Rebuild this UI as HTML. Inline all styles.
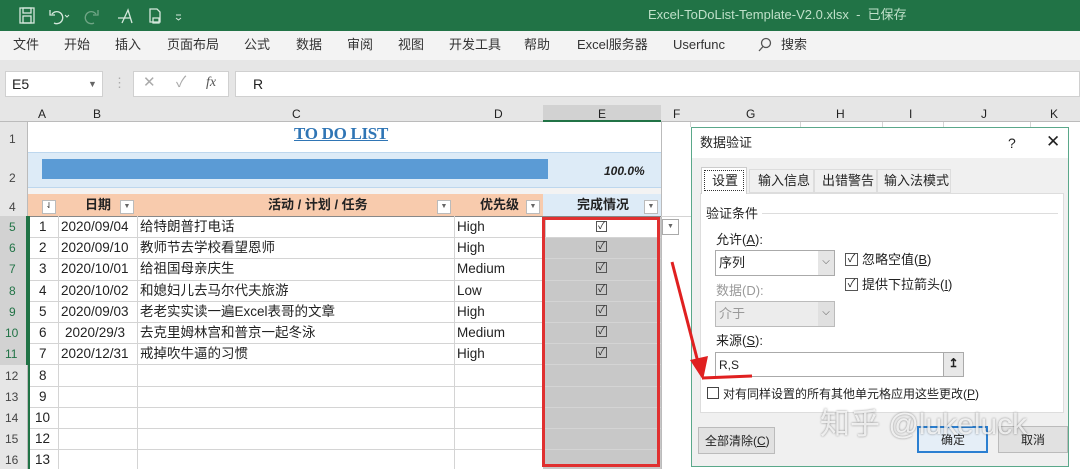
<!DOCTYPE html>
<html><head><meta charset="utf-8"><style>
*{margin:0;padding:0;box-sizing:border-box}
body{width:1080px;height:469px;overflow:hidden;background:#fff;font-family:"Liberation Sans","Noto Sans CJK SC",sans-serif;position:relative;font-size:13px;color:#222}
.a{position:absolute}
.t{position:absolute;white-space:nowrap;line-height:16px}
.hl{position:absolute;height:1px;background:#d4d4d4}
.vl{position:absolute;width:1px;background:#d4d4d4}
.chk{position:absolute;width:11px;height:11px;border:1px solid #555;font-size:10px;line-height:9px;text-align:center}
</style></head><body>
<!-- title bar -->
<div class="a" style="left:0;top:0;width:1080px;height:31px;background:#217346"></div>
<svg class="a" style="left:18px;top:6px" width="170" height="20" fill="none" stroke="#d5e8dc" stroke-width="1.3">
<rect x="2" y="2" width="14" height="15"/><rect x="5" y="2" width="8" height="5"/><rect x="5" y="10" width="8" height="7"/>
<path d="M34 8 a6 6 0 1 1 2 9 M32 4 v5 h5"/><path d="M47 9 l2 2 l2 -2" stroke-width="1"/>
<path d="M78 8 a6 6 0 1 0 -2 9 M80 4 v5 h-5" stroke="#6fa585"/>
<path d="M104 17 l6 -13 l4 13 M100 12 h12"/>
<path d="M132 3 h7 l3 3 v10 h-10z M135 12 h6 v5 h-6z"/>
<path d="M158 9 h5 M158 12 l2.5 2 l2.5 -2" stroke-width="1"/>
</svg>
<div class="t" style="left:648px;top:7px;color:#bfe0c9;font-size:13px">Excel-ToDoList-Template-V2.0.xlsx&nbsp; - &nbsp;已保存</div>
<!-- menu -->
<div class="a" style="left:0;top:31px;width:1080px;height:29px;background:#f3f3f3"></div>
<div class="t" style="top:37px;left:13px;color:#333">文件</div>
<div class="t" style="top:37px;left:64px;color:#333">开始</div>
<div class="t" style="top:37px;left:115px;color:#333">插入</div>
<div class="t" style="top:37px;left:167px;color:#333">页面布局</div>
<div class="t" style="top:37px;left:244px;color:#333">公式</div>
<div class="t" style="top:37px;left:296px;color:#333">数据</div>
<div class="t" style="top:37px;left:347px;color:#333">审阅</div>
<div class="t" style="top:37px;left:398px;color:#333">视图</div>
<div class="t" style="top:37px;left:449px;color:#333">开发工具</div>
<div class="t" style="top:37px;left:524px;color:#333">帮助</div>
<div class="t" style="top:37px;left:577px;color:#333">Excel服务器</div>
<div class="t" style="top:37px;left:673px;color:#333">Userfunc</div>
<svg class="a" style="left:757px;top:37px" width="16" height="16" fill="none" stroke="#555" stroke-width="1.3"><circle cx="9" cy="6" r="4.5"/><path d="M6 9.5 L2 14"/></svg>
<div class="t" style="top:37px;left:781px;color:#333">搜索</div>
<!-- formula area -->
<div class="a" style="left:0;top:60px;width:1080px;height:45px;background:#e6e6e6"></div>
<div class="a" style="left:5px;top:71px;width:98px;height:26px;background:#fff;border:1px solid #d0d0d0"></div>
<div class="t" style="left:12px;top:76px;font-size:14px">E5</div>
<div class="t" style="left:88px;top:76px;font-size:9px;color:#666">▼</div>
<div class="t" style="left:113px;top:75px;color:#aaa">⋮</div>
<div class="a" style="left:133px;top:71px;width:96px;height:26px;background:#fff;border:1px solid #d0d0d0"></div>
<div class="t" style="left:143px;top:75px;color:#aaa;font-size:15px">✕</div>
<div class="t" style="left:176px;top:75px;color:#aaa;font-size:15px">✓</div>
<div class="t" style="left:206px;top:75px;color:#555;font-style:italic;font-family:'Liberation Serif',serif;font-size:14px">fx</div>
<div class="a" style="left:235px;top:71px;width:845px;height:26px;background:#fff;border:1px solid #d0d0d0"></div>
<div class="t" style="left:253px;top:76px;font-size:14px">R</div>
<!-- column headers -->
<div class="a" style="left:0;top:105px;width:1080px;height:17px;background:#e6e6e6;border-bottom:1px solid #bbb"></div>
<div class="a" style="left:543px;top:105px;width:118px;height:17px;background:#d2d2d2;border-bottom:2px solid #217346"></div>
<div class="t" style="left:38px;top:106px;font-size:12px">A</div>
<div class="t" style="left:93px;top:106px;font-size:12px">B</div>
<div class="t" style="left:292px;top:106px;font-size:12px">C</div>
<div class="t" style="left:494px;top:106px;font-size:12px">D</div>
<div class="t" style="left:598px;top:106px;font-size:12px">E</div>
<div class="t" style="left:673px;top:106px;font-size:12px">F</div>
<div class="t" style="left:746px;top:106px;font-size:12px">G</div>
<div class="t" style="left:836px;top:106px;font-size:12px">H</div>
<div class="t" style="left:909px;top:106px;font-size:12px">I</div>
<div class="t" style="left:981px;top:106px;font-size:12px">J</div>
<div class="t" style="left:1050px;top:106px;font-size:12px">K</div>
<!-- row headers -->
<div class="a" style="left:0;top:122px;width:28px;height:347px;background:#e6e6e6;border-right:1px solid #bbb"></div>
<div class="a" style="left:0;top:216px;width:28px;height:149px;background:#d2d2d2;border-right:2px solid #217346"></div>
<div style="position:absolute;left:0;top:0;width:28px;font-size:12px;color:#444">
<div class="t" style="left:9px;top:131px">1</div><div class="t" style="left:9px;top:170px">2</div><div class="t" style="left:9px;top:199px">4</div>
<div class="t" style="left:9px;top:219px;color:#217346">5</div><div class="t" style="left:9px;top:240px;color:#217346">6</div><div class="t" style="left:9px;top:261px;color:#217346">7</div><div class="t" style="left:9px;top:283px;color:#217346">8</div><div class="t" style="left:9px;top:304px;color:#217346">9</div><div class="t" style="left:5px;top:325px;color:#217346">10</div><div class="t" style="left:5px;top:346px;color:#217346">11</div><div class="t" style="left:5px;top:368px">12</div><div class="t" style="left:5px;top:389px">13</div><div class="t" style="left:5px;top:410px">14</div><div class="t" style="left:5px;top:431px">15</div><div class="t" style="left:5px;top:452px">16</div>
</div>
<!-- row 1,2 -->
<div class="t" style="left:294px;top:126px;font-family:'Liberation Serif',serif;font-weight:bold;font-size:17px;color:#2f75b5;text-decoration:underline;letter-spacing:-0.3px">TO DO LIST</div>
<div class="a" style="left:28px;top:152px;width:633px;height:36px;background:#ddebf7;border-top:1px solid #bdd7ee;border-bottom:1px solid #bdd7ee"></div>
<div class="a" style="left:42px;top:159px;width:506px;height:20px;background:#5b9bd5"></div>
<div class="t" style="left:604px;top:163px;font-weight:bold;font-style:italic;font-size:12px">100.0%</div>
<div class="hl" style="left:28px;top:188px;width:633px;height:6px;background:#f3f3f3"></div>
<!-- header row 4 -->
<div class="a" style="left:28px;top:194px;width:515px;height:22px;background:#f8cbad"></div>
<div class="a" style="left:543px;top:194px;width:118px;height:22px;background:#ddebf7"></div>
<div class="t" style="left:85px;top:197px;font-weight:bold">日期</div>
<div class="t" style="left:268px;top:197px;font-weight:bold">活动 / 计划 / 任务</div>
<div class="t" style="left:480px;top:197px;font-weight:bold">优先级</div>
<div class="t" style="left:577px;top:197px;font-weight:bold">完成情况</div>
<div class="a" style="left:42px;top:200px;width:14px;height:14px;background:#fff;border:1px solid #bbb;font-size:8px;text-align:center">⇃</div>
<div class="a" style="left:120px;top:200px;width:14px;height:14px;background:#fff;border:1px solid #bbb;font-size:7px;text-align:center;line-height:12px;color:#666">▼</div>
<div class="a" style="left:437px;top:200px;width:14px;height:14px;background:#fff;border:1px solid #bbb;font-size:7px;text-align:center;line-height:12px;color:#666">▼</div>
<div class="a" style="left:526px;top:200px;width:14px;height:14px;background:#fff;border:1px solid #bbb;font-size:7px;text-align:center;line-height:12px;color:#666">▼</div>
<div class="a" style="left:644px;top:200px;width:14px;height:14px;background:#fff;border:1px solid #bbb;font-size:7px;text-align:center;line-height:12px;color:#666">▼</div>
<!-- data grid -->
<div class="a" style="left:543px;top:216px;width:118px;height:253px;background:#c8c8c8"></div>
<div class="a" style="left:546px;top:218px;width:111px;height:19px;background:#fff"></div>
<div class="hl" style="left:28px;top:216px;width:633px;background:#888"></div>
<div class="hl" style="left:28px;top:237px;width:633px"></div><div class="hl" style="left:28px;top:258px;width:633px"></div><div class="hl" style="left:28px;top:280px;width:633px"></div><div class="hl" style="left:28px;top:301px;width:633px"></div><div class="hl" style="left:28px;top:322px;width:633px"></div><div class="hl" style="left:28px;top:343px;width:633px"></div><div class="hl" style="left:28px;top:364px;width:633px"></div><div class="hl" style="left:28px;top:386px;width:633px"></div><div class="hl" style="left:28px;top:407px;width:633px"></div><div class="hl" style="left:28px;top:428px;width:633px"></div><div class="hl" style="left:28px;top:449px;width:633px"></div>
<div class="vl" style="left:58px;top:216px;height:253px"></div><div class="vl" style="left:137px;top:216px;height:253px"></div><div class="vl" style="left:454px;top:216px;height:253px"></div><div class="vl" style="left:661px;top:122px;height:347px;background:#bbb"></div>
<div style="font-size:13.5px">
<div class="t" style="left:39px;top:219px">1</div><div class="t" style="left:61px;top:219px">2020/09/04</div><div class="t" style="left:140px;top:219px">给特朗普打电话</div><div class="t" style="left:457px;top:219px">High</div>
<div class="t" style="left:39px;top:240px">2</div><div class="t" style="left:61px;top:240px">2020/09/10</div><div class="t" style="left:140px;top:240px">教师节去学校看望恩师</div><div class="t" style="left:457px;top:240px">High</div>
<div class="t" style="left:39px;top:261px">3</div><div class="t" style="left:61px;top:261px">2020/10/01</div><div class="t" style="left:140px;top:261px">给祖国母亲庆生</div><div class="t" style="left:457px;top:261px">Medium</div>
<div class="t" style="left:39px;top:283px">4</div><div class="t" style="left:61px;top:283px">2020/10/02</div><div class="t" style="left:140px;top:283px">和媳妇儿去马尔代夫旅游</div><div class="t" style="left:457px;top:283px">Low</div>
<div class="t" style="left:39px;top:304px">5</div><div class="t" style="left:61px;top:304px">2020/09/03</div><div class="t" style="left:140px;top:304px">老老实实读一遍Excel表哥的文章</div><div class="t" style="left:457px;top:304px">High</div>
<div class="t" style="left:39px;top:325px">6</div><div class="t" style="left:65px;top:325px">2020/29/3</div><div class="t" style="left:140px;top:325px">去克里姆林宫和普京一起冬泳</div><div class="t" style="left:457px;top:325px">Medium</div>
<div class="t" style="left:39px;top:346px">7</div><div class="t" style="left:61px;top:346px">2020/12/31</div><div class="t" style="left:140px;top:346px">戒掉吹牛逼的习惯</div><div class="t" style="left:457px;top:346px">High</div>
<div class="t" style="left:39px;top:368px">8</div><div class="t" style="left:39px;top:389px">9</div><div class="t" style="left:35px;top:410px">10</div><div class="t" style="left:35px;top:431px">12</div><div class="t" style="left:35px;top:452px">13</div>
</div>
<div class="chk" style="left:596px;top:221px">✓</div><div class="chk" style="left:596px;top:241px">✓</div><div class="chk" style="left:596px;top:262px">✓</div><div class="chk" style="left:596px;top:284px">✓</div><div class="chk" style="left:596px;top:305px">✓</div><div class="chk" style="left:596px;top:326px">✓</div><div class="chk" style="left:596px;top:347px">✓</div>
<div class="a" style="left:28px;top:216px;width:2px;height:253px;background:#217346"></div>
<div class="a" style="left:542px;top:217px;width:118px;height:250px;border:3px solid #e03030"></div>
<div class="a" style="left:662px;top:219px;width:17px;height:16px;background:#fff;border:1px solid #aaa;font-size:7px;text-align:center;line-height:14px;color:#666">▼</div>
<!-- right grid cols -->
<div class="vl" style="left:690px;top:122px;height:5px"></div><div class="vl" style="left:800px;top:122px;height:5px"></div><div class="vl" style="left:882px;top:122px;height:5px"></div><div class="vl" style="left:943px;top:122px;height:5px"></div><div class="vl" style="left:1030px;top:122px;height:5px"></div>
<div class="hl" style="left:661px;top:216px;width:31px"></div>
<!-- dialog -->
<div class="a" style="left:691px;top:127px;width:378px;height:340px;background:#f0f0f0;border:1px solid #5aa88a"></div>
<div class="a" style="left:692px;top:128px;width:376px;height:30px;background:#fff"></div>
<div class="t" style="left:700px;top:135px">数据验证</div>
<div class="t" style="left:1008px;top:135px;font-size:14px">?</div>
<div class="t" style="left:1046px;top:134px;font-size:17px">✕</div>
<div class="a" style="left:700px;top:193px;width:364px;height:220px;background:#fff;border:1px solid #ddd"></div>
<div class="a" style="left:701px;top:167px;width:46px;height:27px;background:#fff;border:1px solid #ccc;border-bottom:none"></div>
<div class="a" style="left:704px;top:170px;width:40px;height:21px;border:1px dotted #333"></div>
<div class="t" style="left:712px;top:173px">设置</div>
<div class="a" style="left:749px;top:169px;width:65px;height:24px;background:#f0f0f0;border:1px solid #ddd"></div><div class="t" style="left:758px;top:173px">输入信息</div>
<div class="a" style="left:814px;top:169px;width:63px;height:24px;background:#f0f0f0;border:1px solid #ddd"></div><div class="t" style="left:822px;top:173px">出错警告</div>
<div class="a" style="left:877px;top:169px;width:74px;height:24px;background:#f0f0f0;border:1px solid #ddd"></div><div class="t" style="left:884px;top:173px">输入法模式</div>
<div class="t" style="left:706px;top:206px">验证条件</div>
<div class="hl" style="left:762px;top:213px;width:296px;background:#ddd"></div>
<div class="t" style="left:716px;top:232px">允许(<u>A</u>):</div>
<div class="a" style="left:715px;top:250px;width:120px;height:26px;background:#fff;border:1px solid #aaa"></div>
<div class="a" style="left:818px;top:251px;width:16px;height:24px;background:#e5e5e5;font-size:10px;text-align:center;line-height:22px;color:#555">⌵</div>
<div class="t" style="left:719px;top:255px">序列</div>
<div class="chk" style="left:845px;top:253px;width:13px;height:13px;font-size:11px;line-height:11px">✓</div><div class="t" style="left:862px;top:252px">忽略空值(<u>B</u>)</div>
<div class="chk" style="left:845px;top:278px;width:13px;height:13px;font-size:11px;line-height:11px">✓</div><div class="t" style="left:862px;top:277px">提供下拉箭头(<u>I</u>)</div>
<div class="t" style="left:716px;top:283px;color:#999">数据(D):</div>
<div class="a" style="left:715px;top:301px;width:120px;height:26px;background:#ececec;border:1px solid #bbb"></div>
<div class="a" style="left:818px;top:302px;width:16px;height:24px;background:#e0e0e0;font-size:10px;text-align:center;line-height:22px;color:#555">⌵</div>
<div class="t" style="left:719px;top:306px;color:#999">介于</div>
<div class="t" style="left:716px;top:333px">来源(<u>S</u>):</div>
<div class="a" style="left:715px;top:352px;width:249px;height:25px;background:#fff;border:1px solid #aaa"></div>
<div class="a" style="left:943px;top:353px;width:20px;height:23px;background:#e8e8e8;border-left:1px solid #aaa;font-size:12px;font-weight:bold;text-align:center;line-height:20px">↥</div>
<div class="t" style="left:719px;top:357px;font-size:12px">R,S</div>
<div class="a" style="left:707px;top:387px;width:12px;height:12px;background:#fff;border:1px solid #444"></div>
<div class="t" style="left:723px;top:386px;font-size:12px">对有同样设置的所有其他单元格应用这些更改(<u>P</u>)</div>
<div class="a" style="left:698px;top:427px;width:77px;height:27px;background:#e1e1e1;border:1px solid #bbb"></div><div class="t" style="left:705px;top:433px;font-size:12px">全部清除(<u>C</u>)</div>
<div class="a" style="left:917px;top:426px;width:71px;height:27px;background:#e5eef7;border:2px solid #2b7fd1"></div><div class="t" style="left:941px;top:432px;font-size:12px">确定</div>
<div class="a" style="left:998px;top:426px;width:70px;height:27px;background:#e1e1e1;border:1px solid #bbb"></div><div class="t" style="left:1021px;top:432px;font-size:12px">取消</div>
<!-- watermark -->
<div class="t" style="left:820px;top:408px;font-size:30px;line-height:34px;color:rgba(255,255,255,0.8);text-shadow:0 0 2px rgba(0,0,0,0.45)">知乎 @lukeluck</div>
<!-- arrow -->
<svg class="a" style="left:660px;top:250px" width="100" height="140"><path d="M12 12 L40 120" stroke="#e02020" stroke-width="3"/><path d="M30 110 L43 130 L48 106z" fill="#e02020"/><path d="M42 128 L92 126" stroke="#e02020" stroke-width="3"/></svg>
</body></html>
